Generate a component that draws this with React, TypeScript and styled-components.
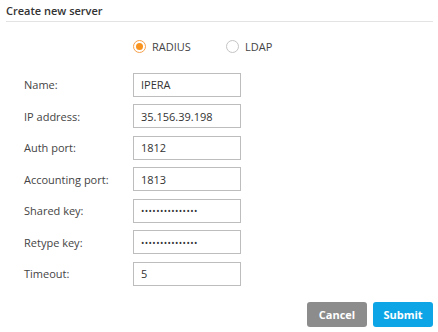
import React, { useState } from 'react';
import styled, { createGlobalStyle } from 'styled-components';

const GlobalStyle = createGlobalStyle`
	html, body {
		margin: 0;
		padding: 0;
		background: #ffffff;
	}
	body {
		font-family: 'Open Sans', 'Noto Sans', sans-serif;
		font-size: 11px;
		color: #333333;
	}
`;

const Dialog = styled.div`
	width: 438px;
	height: 332px;
	box-sizing: border-box;
	padding: 0 5px 0 6px;
	display: flex;
	flex-direction: column;
`;

const Title = styled.h2`
	margin: 0;
	height: 22px;
	box-sizing: border-box;
	padding-top: 3px;
	font-size: 11px;
	font-weight: 600;
	color: #333333;
	border-bottom: 1px solid #e3e3e3;
`;

const Form = styled.div`
	display: grid;
	grid-template-columns: 109px 108px;
	column-gap: 0;
	row-gap: 7.5px;
	padding-left: 18px;
	margin-top: 17px;
`;

const RadioGroup = styled.div`
	grid-column: 2;
	display: flex;
	align-items: center;
	height: 14px;
	margin-bottom: 12px;
	white-space: nowrap;
`;

const RadioOption = styled.label`
	display: flex;
	align-items: center;
	flex-shrink: 0;
	gap: 6px;
	width: 93px;
	color: #444444;
	cursor: pointer;
`;

const RadioCircle = styled.span<{ $checked: boolean }>`
	width: 13px;
	height: 13px;
	box-sizing: border-box;
	border-radius: 50%;
	border: 1px solid ${(p) => (p.$checked ? '#f7a04a' : '#c4c4c4')};
	display: flex;
	align-items: center;
	justify-content: center;

	&::after {
		content: '';
		width: 7px;
		height: 7px;
		border-radius: 50%;
		background: ${(p) => (p.$checked ? '#f7931e' : 'transparent')};
	}
`;

const Label = styled.span`
	display: flex;
	align-items: center;
	height: 24px;
	color: #444444;
`;

const Field = styled.input`
	width: 108px;
	height: 24px;
	box-sizing: border-box;
	margin: 0;
	padding: 0 7px;
	border: 1px solid #bdbdbd;
	border-radius: 0;
	font-family: inherit;
	font-size: 11px;
	color: #333333;
	outline: none;

	&[type='password'] {
		font-size: 9px;
		letter-spacing: 0.4px;
	}
`;

const Footer = styled.div`
	display: flex;
	justify-content: flex-end;
	gap: 6px;
	margin-top: 16px;
`;

const Button = styled.button<{ $primary?: boolean }>`
	width: 60px;
	height: 25px;
	border: none;
	border-radius: 3px;
	background: ${(p) => (p.$primary ? '#0ea5e6' : '#8c8c8c')};
	color: #ffffff;
	font-family: inherit;
	font-size: 11px;
	font-weight: 700;
	cursor: pointer;
`;

const fields = [
	{ label: 'Name:', value: 'IPERA', type: 'text' },
	{ label: 'IP address:', value: '35.156.39.198', type: 'text' },
	{ label: 'Auth port:', value: '1812', type: 'text' },
	{ label: 'Accounting port:', value: '1813', type: 'text' },
	{ label: 'Shared key:', value: 'secretsecret123', type: 'password' },
	{ label: 'Retype key:', value: 'secretsecret123', type: 'password' },
	{ label: 'Timeout:', value: '5', type: 'text' },
];

const App: React.FC = () => {
	const [proto, setProto] = useState('radius');

	return (
		<React.Fragment>
			<GlobalStyle />
			<Dialog>
				<Title>Create new server</Title>
				<Form>
					<RadioGroup>
						<RadioOption onClick={() => setProto('radius')}>
							<RadioCircle $checked={proto === 'radius'} />
							RADIUS
						</RadioOption>
						<RadioOption onClick={() => setProto('ldap')}>
							<RadioCircle $checked={proto === 'ldap'} />
							LDAP
						</RadioOption>
					</RadioGroup>
					{fields.map((f) => (
						<React.Fragment key={f.label}>
							<Label>{f.label}</Label>
							<Field type={f.type} defaultValue={f.value} />
						</React.Fragment>
					))}
				</Form>
				<Footer>
					<Button>Cancel</Button>
					<Button $primary>Submit</Button>
				</Footer>
			</Dialog>
		</React.Fragment>
	);
};

export default App;
